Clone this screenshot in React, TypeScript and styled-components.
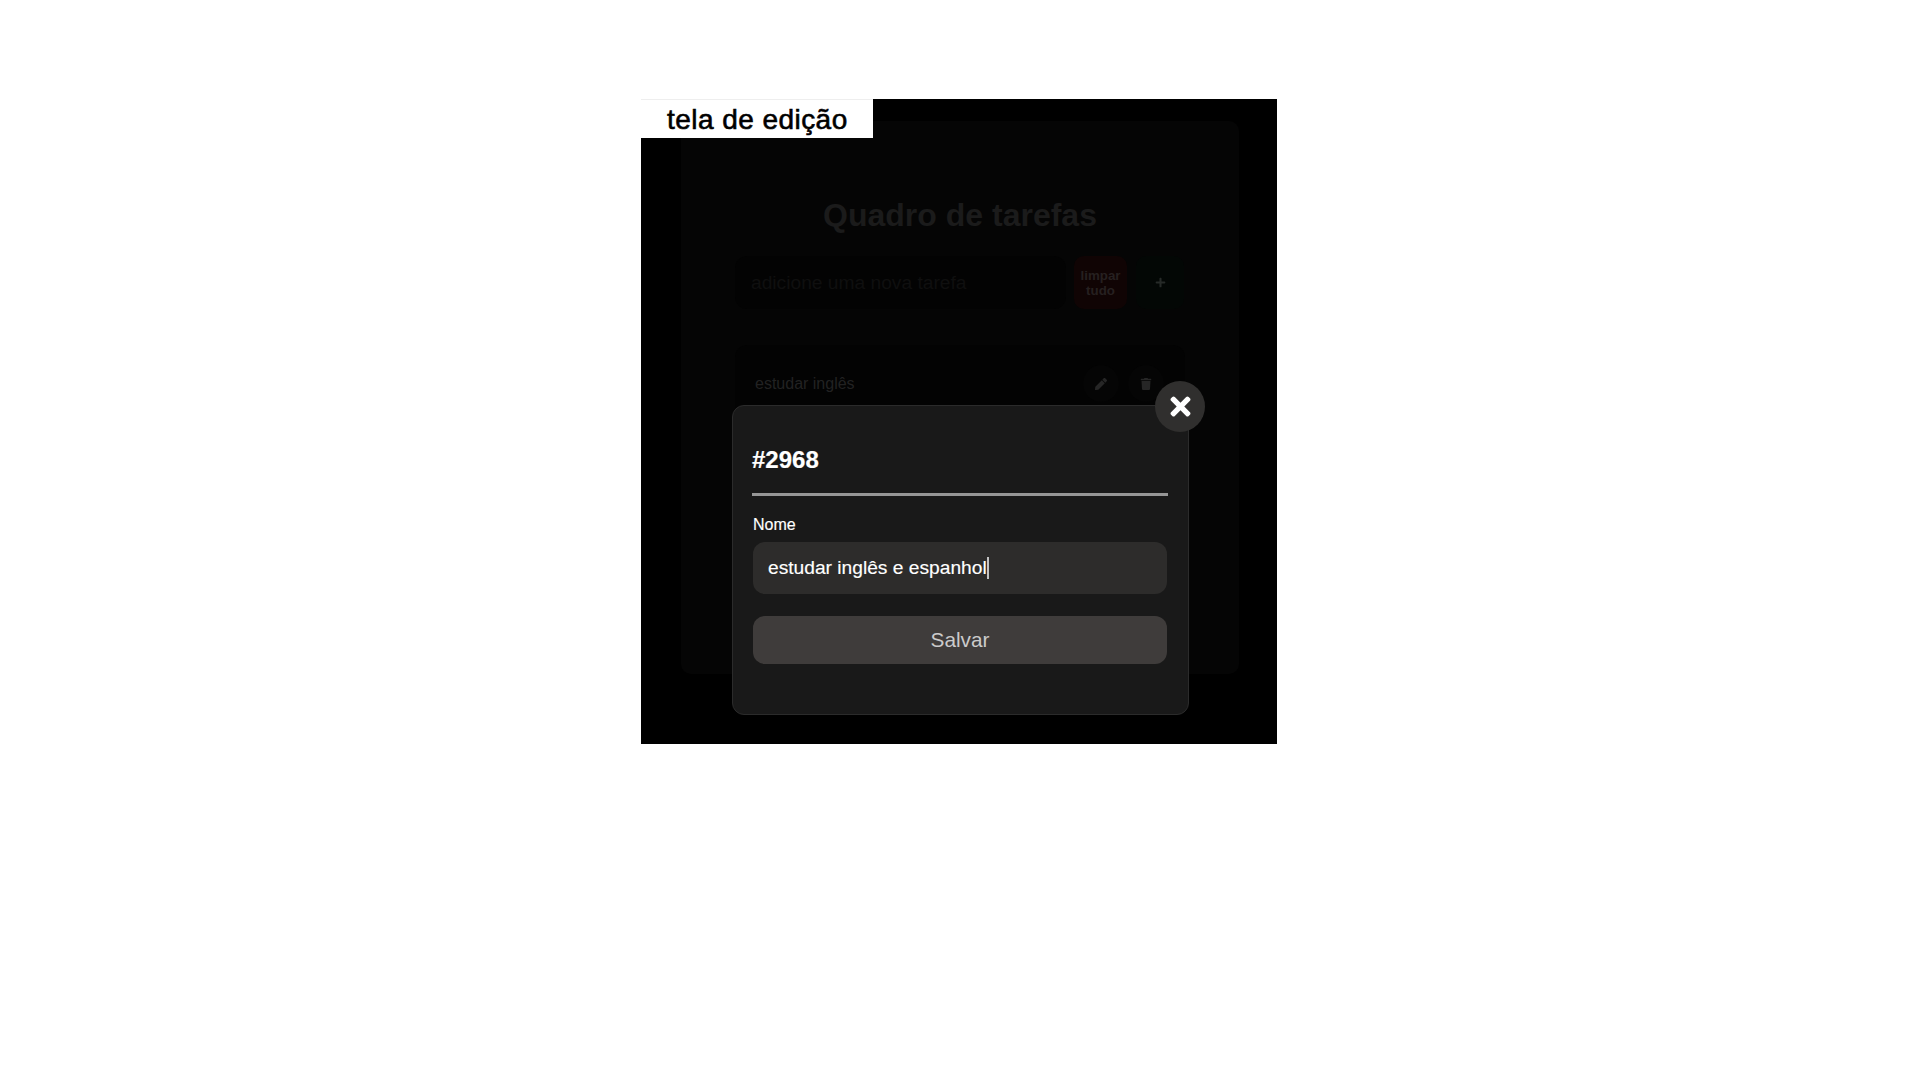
import React from "react";
import styled, { createGlobalStyle } from "styled-components";
import { FaPen, FaPlus, FaTimes, FaTrash } from "react-icons/fa";

const Global = createGlobalStyle`
  html, body { margin: 0; padding: 0; background: #fff; }
  body { font-family: "Liberation Sans", Arial, sans-serif; }
  * { box-sizing: border-box; }
`;

const Page = styled.main`
  width: 1920px;
  height: 1080px;
  padding: 99px 0 0 641px;
  overflow: hidden;
`;

const Frame = styled.section`
  position: relative;
  width: 636px;
  height: 645px;
  background: #000;
  padding: 22px 38px 0 40px;
`;

const Caption = styled.div`
  position: absolute;
  left: 0;
  top: 0;
  width: 232px;
  height: 39px;
  padding-left: 26px;
  background: #fff;
  border-top: 1px solid #eee;
  color: #000;
  font-size: 28px;
  line-height: 39px;
  letter-spacing: 0.45px;
  -webkit-text-stroke: 0.6px #000;
`;

const Board = styled.div`
  width: 558px;
  height: 553px;
  background: #050505;
  border-radius: 10px;
  padding: 0 54px;
  display: flex;
  flex-direction: column;
`;

const BoardTitle = styled.h1`
  margin: 76px 0 0;
  color: #1b1b1b;
  font-size: 32px;
  line-height: 36px;
  font-weight: 700;
  text-align: center;
`;

const AddRow = styled.div`
  display: flex;
  margin-top: 23px;
  height: 53px;
`;

const AddField = styled.div`
  width: 331px;
  border-radius: 12px;
  background: #030303;
  color: #0f0f0f;
  font-size: 19.2px;
  line-height: 53px;
  padding-left: 16px;
`;

const ClearButton = styled.button`
  width: 53px;
  margin-left: 8px;
  padding: 0 6px;
  border: 0;
  border-radius: 10px;
  background: #100404;
  color: #262020;
  font: 700 13.3px/15px "Liberation Sans", Arial, sans-serif;
`;

const AddButton = styled.button`
  width: 48px;
  margin-left: 9px;
  border: 0;
  border-radius: 10px;
  background: #030705;
  color: #262a28;
  display: flex;
  align-items: center;
  justify-content: center;
  font-size: 11px;
`;

const TaskList = styled.div`
  margin-top: 36px;
  width: 450px;
  height: 180px;
  border-radius: 12px;
  background: #030303;
  padding: 20px 21px 0 20px;
`;

const TaskRow = styled.div`
  display: flex;
  align-items: center;
  height: 37px;
`;

const TaskName = styled.span`
  flex: 1;
  color: #222;
  font-size: 16px;
`;

const RoundButton = styled.button`
  width: 36px;
  height: 37px;
  margin-left: 9px;
  padding: 0;
  border: 0;
  border-radius: 50%;
  background: #050505;
  color: #262626;
  display: flex;
  align-items: center;
  justify-content: center;
  font-size: 12px;
`;

const Modal = styled.div`
  position: absolute;
  left: 91px;
  top: 306px;
  width: 457px;
  height: 310px;
  background: #191919;
  border: 1px solid #2b2b2b;
  border-radius: 12px;
  padding: 40px 20px 0 19px;
`;

const CloseButton = styled.button`
  position: absolute;
  right: -17px;
  top: -25px;
  width: 50px;
  height: 51px;
  padding: 0;
  border: 0;
  border-radius: 50%;
  background: #302f2e;
  color: #fff;
  display: flex;
  align-items: center;
  justify-content: center;
  font-size: 29px;
`;

const ModalTitle = styled.h2`
  margin: 0;
  padding-bottom: 19px;
  border-bottom: 3px solid #969696;
  color: #fff;
  font-size: 24px;
  line-height: 28px;
  font-weight: 700;
  -webkit-text-stroke: 0.2px #fff;
`;

const FieldLabel = styled.label`
  display: block;
  margin: 19px 0 8px 1px;
  color: #fff;
  font-size: 16px;
  line-height: 19px;
  -webkit-text-stroke: 0.15px #fff;
`;

const Field = styled.div`
  margin: 0 1px;
  height: 52px;
  display: flex;
  align-items: center;
  padding-left: 15px;
  background: #2d2c2b;
  border-radius: 12px;
  color: #fff;
  font-size: 19.2px;
  -webkit-text-stroke: 0.15px #fff;
`;

const Caret = styled.span`
  width: 1.5px;
  height: 22px;
  margin-left: 0.5px;
  background: #c4c4c4;
`;

const SaveButton = styled.button`
  display: block;
  width: calc(100% - 2px);
  height: 48px;
  margin: 22px 1px 0;
  border: 0;
  border-radius: 12px;
  background: #3f3c3b;
  color: #cbcbcb;
  font: 400 20.8px "Liberation Sans", Arial, sans-serif;
`;

export default function App() {
  return (
    <Page>
      <Global />
      <Frame>
        <Caption>tela de edição</Caption>
        <Board>
          <BoardTitle>Quadro de tarefas</BoardTitle>
          <AddRow>
            <AddField>adicione uma nova tarefa</AddField>
            <ClearButton>limpar tudo</ClearButton>
            <AddButton aria-label="adicionar">
              <FaPlus />
            </AddButton>
          </AddRow>
          <TaskList>
            <TaskRow>
              <TaskName>estudar inglês</TaskName>
              <RoundButton aria-label="editar">
                <FaPen />
              </RoundButton>
              <RoundButton aria-label="excluir">
                <FaTrash />
              </RoundButton>
            </TaskRow>
          </TaskList>
        </Board>
        <Modal>
          <CloseButton aria-label="fechar">
            <FaTimes />
          </CloseButton>
          <ModalTitle>#2968</ModalTitle>
          <FieldLabel>Nome</FieldLabel>
          <Field>
            estudar inglês e espanhol
            <Caret />
          </Field>
          <SaveButton>Salvar</SaveButton>
        </Modal>
      </Frame>
    </Page>
  );
}
